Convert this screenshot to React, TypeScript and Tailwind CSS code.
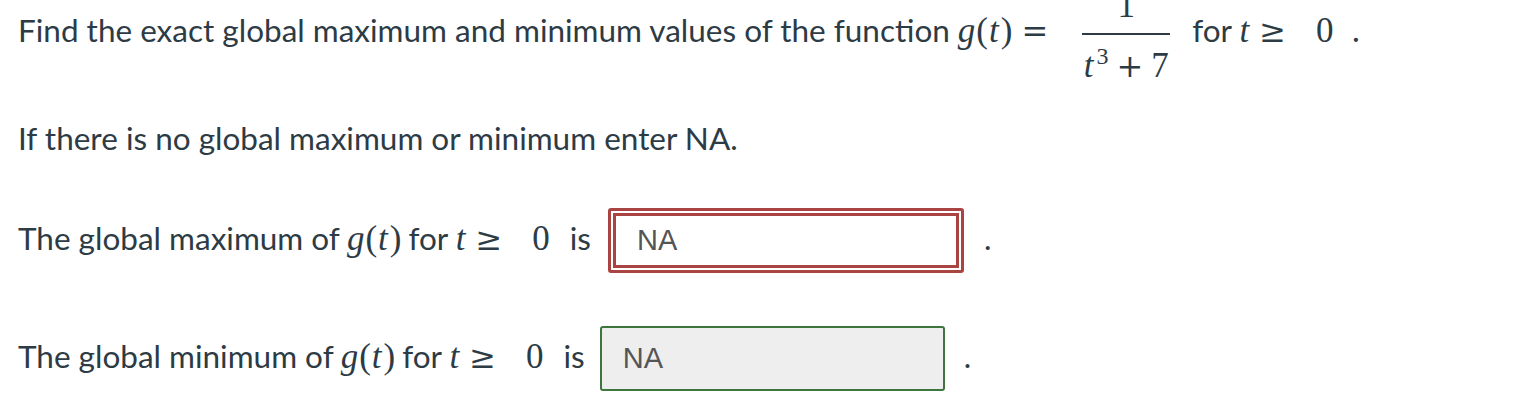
import React from "react";

const M = ({ children, className = "" }: { children: React.ReactNode; className?: string }) => (
  <span className={"font-['Liberation_Serif',serif] text-[35px] " + className}>{children}</span>
);

const Op = ({ children, className = "" }: { children: React.ReactNode; className?: string }) => (
  <span className={"font-['DejaVu_Serif',serif] text-[32px] " + className}>{children}</span>
);

const GofT = ({ className = "" }: { className?: string }) => (
  <M className={className}>
    <i>g</i>
    <span className="ml-[1px]">(</span>
    <i className="ml-[1px]">t</i>
    <span className="ml-[2px]">)</span>
  </M>
);

const Cond = () => (
  <>
    <span>for </span>
    <M>
      <i>t</i>
      <Op className="ml-[10px]">≥</Op>
      <span className="ml-[30px]">0</span>
    </M>
  </>
);

export default function App() {
  return (
    <div className="w-[1519px] h-[400px] overflow-hidden bg-white text-[#2d3b45] font-['Lato',sans-serif] text-[31.5px]">
      <div className="pl-[18px]">
        <p className="whitespace-nowrap leading-[38px] mt-[-11px] h-[84px]">
          Find the exact global maximum and minimum values of the function
          <GofT className="ml-[8px]" />
          <Op className="ml-[9px]">=</Op>
          <span className="inline-flex flex-col items-center align-[25px] ml-[34px] mr-[22px] font-['Liberation_Serif',serif] text-[35px]">
            <span className="leading-[34px]">1</span>
            <span className="mt-[10px] h-[2px] w-[88px] bg-[#2d3b45]" />
            <span className="leading-[34px] mt-[4px] whitespace-nowrap">
              <i>t</i>
              <span className="text-[24px] ml-[3px] align-[13px]">3</span>
              <Op className="mx-[8px]">+</Op>7
            </span>
          </span>
          <Cond />
          <M className="ml-[18px]">.</M>
        </p>
        <p className="whitespace-nowrap leading-[38px] mt-[46px]">
          If there is no global maximum or minimum enter NA.
        </p>
        <div className="flex items-baseline mt-[51px] whitespace-nowrap leading-[38px]">
          <span>
            The global maximum of
            <GofT className="ml-[7px] mr-[7px]" />
            <Cond />
            <span className="ml-[20px]">is</span>
          </span>
          <div className="ml-[17px] w-[356px] h-[65px] border-[8px] border-double border-[#a94442] rounded-[3px] bg-white flex items-center pl-[21px] font-['Liberation_Sans',sans-serif] text-[29px] leading-[29px] text-[#555555]">
            NA
          </div>
          <span className="ml-[20px]">.</span>
        </div>
        <div className="flex items-baseline mt-[53px] whitespace-nowrap leading-[38px]">
          <span>
            The global minimum of
            <GofT className="ml-[7px] mr-[7px]" />
            <Cond />
            <span className="ml-[20px]">is</span>
          </span>
          <div className="ml-[15px] w-[345px] h-[65px] border-2 border-[#3c763d] rounded-[3px] bg-[#eeeeee] flex items-center pl-[21px] font-['Liberation_Sans',sans-serif] text-[29px] leading-[29px] text-[#555555]">
            NA
          </div>
          <span className="ml-[19px]">.</span>
        </div>
      </div>
    </div>
  );
}
